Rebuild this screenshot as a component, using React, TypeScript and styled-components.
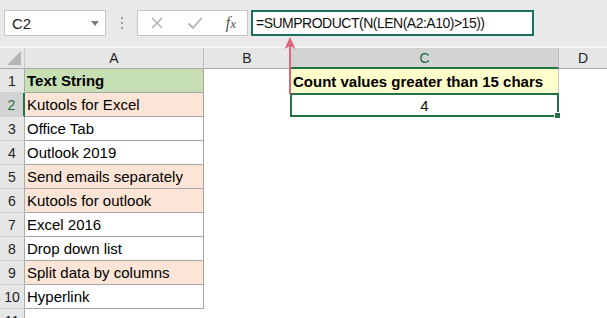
import styled, { createGlobalStyle } from 'styled-components';

const GlobalStyle = createGlobalStyle`
  html, body {
    margin: 0;
    padding: 0;
    background: #ffffff;
  }
  body {
    width: 607px;
    height: 318px;
    overflow: hidden;
    font-family: "Liberation Sans", Arial, sans-serif;
  }
`;

const rows = [
    { text: 'Text String', kind: 'head' },
    { text: 'Kutools for Excel', kind: 'pink' },
    { text: 'Office Tab', kind: 'plain' },
    { text: 'Outlook 2019', kind: 'plain' },
    { text: 'Send emails separately', kind: 'pink' },
    { text: 'Kutools for outlook', kind: 'pink' },
    { text: 'Excel 2016', kind: 'plain' },
    { text: 'Drop down list', kind: 'plain' },
    { text: 'Split data by columns', kind: 'pink' },
    { text: 'Hyperlink', kind: 'plain' },
];

const App = () => {
    return (
        <Page>
            <GlobalStyle />
            <FormulaBar>
                <NameBox>
                    <span>C2</span>
                    <DropCaret />
                </NameBox>
                <Grip>
                    <i />
                    <i />
                    <i />
                </Grip>
                <ButtonBox>
                    <svg width="14" height="14" viewBox="0 0 14 14">
                        <path d="M2 2 L12 12 M12 2 L2 12" stroke="#b3b3b3" strokeWidth="1.6" fill="none" />
                    </svg>
                    <svg width="16" height="14" viewBox="0 0 16 14">
                        <path d="M1.5 7.5 L6 12 L14.5 2" stroke="#b3b3b3" strokeWidth="1.8" fill="none" />
                    </svg>
                    <Fx>
                        <b>f</b>x
                    </Fx>
                </ButtonBox>
                <FormulaInput>=SUMPRODUCT(N(LEN(A2:A10)&gt;15))</FormulaInput>
            </FormulaBar>
            <Gap />
            <Sheet>
                <Corner>
                    <svg width="14" height="14" viewBox="0 0 14 14">
                        <polygon points="14,0 14,14 0,14" fill="#b5b5b5" />
                    </svg>
                </Corner>
                <ColHead>A</ColHead>
                <ColHead>B</ColHead>
                <ColHead $active>C</ColHead>
                <ColHead $last>D</ColHead>

                {rows.map((r, i) => (
                    <Row key={i}>
                        <RowHead $active={i === 1}>{i + 1}</RowHead>
                        <DataCell $kind={r.kind}>{r.text}</DataCell>
                        <EmptyCell />
                        {i === 0 && <TitleCell>Count values greater than 15 chars</TitleCell>}
                        {i === 1 && (
                            <ResultCell>
                                4<FillHandle />
                            </ResultCell>
                        )}
                        {i > 1 && <EmptyCell />}
                        <EmptyCell />
                    </Row>
                ))}
                <RowHead>11</RowHead>
            </Sheet>
            <Arrow width="14" height="58" viewBox="0 0 14 58">
                <line x1="7" y1="6" x2="7" y2="58" stroke="#dc667c" strokeWidth="2" />
                <polygon points="7,1 1.5,13 7,10 12.5,13" fill="#dc667c" />
            </Arrow>
        </Page>
    );
};

const Page = styled.div`
  position: relative;
  width: 607px;
  height: 318px;
  overflow: hidden;
  background: #ffffff;
`;

const FormulaBar = styled.div`
  display: flex;
  align-items: center;
  height: 46px;
  padding: 0 0 0 4px;
  background: #e9e9e9;
  box-sizing: border-box;
`;

const NameBox = styled.div`
  display: flex;
  align-items: center;
  justify-content: space-between;
  width: 102px;
  height: 26px;
  padding: 0 6px 0 7px;
  box-sizing: border-box;
  background: #ffffff;
  border: 1px solid #c6c6c6;
  font-size: 15px;
  color: #222;
`;

const DropCaret = styled.span`
  width: 0;
  height: 0;
  border-left: 4px solid transparent;
  border-right: 4px solid transparent;
  border-top: 5px solid #7a7a7a;
`;

const Grip = styled.div`
  display: flex;
  flex-direction: column;
  align-items: center;
  gap: 3px;
  width: 31px;
  i {
    display: block;
    width: 2px;
    height: 2px;
    background: #9d9d9d;
  }
`;

const ButtonBox = styled.div`
  display: flex;
  align-items: center;
  justify-content: space-between;
  width: 111px;
  height: 26px;
  padding: 0 11px 0 12px;
  box-sizing: border-box;
  background: #ffffff;
  border: 1px solid #c6c6c6;
`;

const Fx = styled.span`
  font-family: "Liberation Serif", "Times New Roman", serif;
  font-style: italic;
  font-size: 13px;
  color: #555;
  b {
    font-weight: normal;
    font-size: 16px;
  }
`;

const FormulaInput = styled.div`
  display: flex;
  align-items: center;
  margin-left: 3px;
  width: 283px;
  height: 26px;
  padding-left: 3px;
  box-sizing: border-box;
  background: #ffffff;
  border: 2px solid #1e6e5f;
  font-size: 14px;
  letter-spacing: -0.5px;
  color: #111;
  white-space: nowrap;
`;

const Gap = styled.div`
  height: 2px;
  background: #f6f6f6;
`;

const Sheet = styled.div`
  display: grid;
  grid-template-columns: 25px 179px 87px 268px 1fr;
  grid-template-rows: 21px repeat(10, 24px) 24px;
  font-size: 15px;
  color: #000;
`;

const Row = styled.div`
  display: contents;
`;

const Corner = styled.div`
  display: flex;
  align-items: flex-end;
  justify-content: flex-end;
  padding: 0 3px 3px 0;
  background: #e6e6e6;
  border-right: 1px solid #c9c9c9;
  border-bottom: 1px solid #ababab;
`;

const ColHead = styled.div<{ $active?: boolean; $last?: boolean }>`
  display: flex;
  align-items: center;
  justify-content: center;
  font-size: 14px;
  color: ${p => (p.$active ? '#1e6b43' : '#222')};
  background: ${p => (p.$active ? '#d3d3d3' : '#e6e6e6')};
  border-right: ${p => (p.$last ? 'none' : '1px solid #bcbcbc')};
  border-bottom: ${p => (p.$active ? '2px solid #217346' : '1px solid #ababab')};
`;

const RowHead = styled.div<{ $active?: boolean }>`
  display: flex;
  align-items: center;
  justify-content: center;
  font-size: 14px;
  color: ${p => (p.$active ? '#1e6b43' : '#222')};
  background: ${p => (p.$active ? '#d3d3d3' : '#e6e6e6')};
  border-right: ${p => (p.$active ? '2px solid #217346' : '1px solid #ababab')};
  border-bottom: 1px solid #d4d4d4;
`;

const cellBg: Record<string, string> = {
    head: '#c6e0b4',
    pink: '#fce4d6',
    plain: '#ffffff',
};

const DataCell = styled.div<{ $kind: string }>`
  display: flex;
  align-items: center;
  padding-left: 2px;
  background: ${p => cellBg[p.$kind]};
  font-weight: ${p => (p.$kind === 'head' ? 700 : 400)};
  border-right: 1px solid #a6a6a6;
  border-bottom: 1px solid #a6a6a6;
  white-space: nowrap;
`;

const EmptyCell = styled.div`
  background: #ffffff;
`;

const TitleCell = styled.div`
  display: flex;
  align-items: center;
  padding-left: 2px;
  background: #ffffcc;
  font-weight: 700;
  white-space: nowrap;
  border-right: 1px solid #c8c8c8;
`;

const ResultCell = styled.div`
  position: relative;
  display: flex;
  align-items: center;
  justify-content: center;
  margin-left: -1px;
  border: 2px solid #217346;
  color: #111;
`;

const FillHandle = styled.span`
  position: absolute;
  right: -4px;
  bottom: -4px;
  width: 5px;
  height: 5px;
  background: #217346;
  border: 1px solid #ffffff;
`;

const Arrow = styled.svg`
  position: absolute;
  left: 283px;
  top: 36px;
`;

export default App;
